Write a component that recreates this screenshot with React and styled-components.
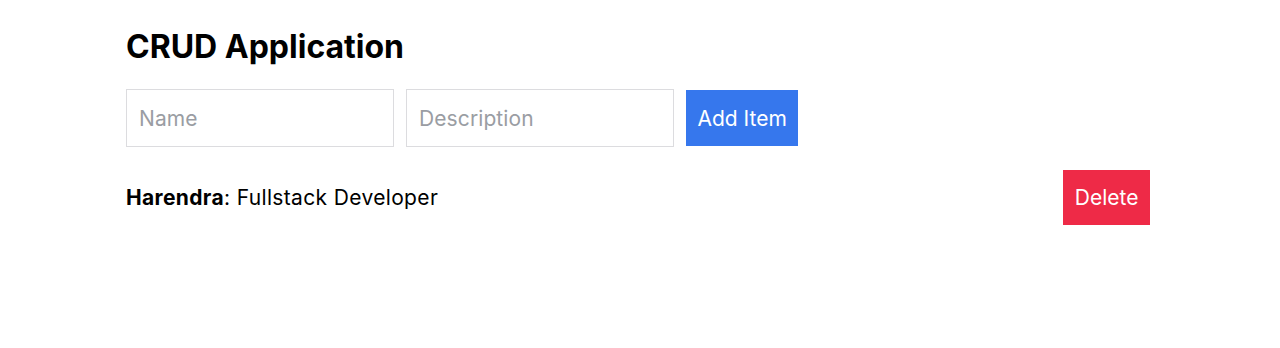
import React, { useState } from "react";
import styled, { createGlobalStyle } from "styled-components";

const Global = createGlobalStyle`
  html, body { margin: 0; padding: 0; background: #fff; }
  body { font-family: Inter, "Noto Sans", sans-serif; color: #000; }
  * { box-sizing: border-box; }
`;

const Page = styled.div`
  width: 1024px;
  margin-left: 126px;
  padding-top: 27px;
`;

const Title = styled.h1`
  margin: 0 0 22px 0;
  font-size: 32px;
  font-weight: 700;
  line-height: 40px;
`;

const Form = styled.form`
  display: flex;
  align-items: center;
  gap: 12px;
`;

const Input = styled.input`
  width: 268px;
  height: 58px;
  border: 1px solid #dcdcdf;
  padding: 0 12px;
  font-family: inherit;
  font-size: 21px;
  letter-spacing: 0.1px;
  color: #000;
  outline: none;
  &::placeholder { color: #9a9da3; }
`;

const Button = styled.button`
  height: ${(p) => p.$h}px;
  padding: 0 11.5px;
  border: none;
  border-radius: 0;
  background: ${(p) => p.$bg};
  color: #fff;
  font-family: inherit;
  font-size: 21px;
  letter-spacing: 0;
  cursor: pointer;
`;

const List = styled.ul`
  list-style: none;
  margin: 23px 0 0 0;
  padding: 0;
`;

const Row = styled.li`
  display: flex;
  align-items: center;
  justify-content: space-between;
  font-size: 21px;
  letter-spacing: 0.35px;
`;

export default function App() {
  const [items] = useState([{ name: "Harendra", description: "Fullstack Developer" }]);
  return (
    <Page>
      <Global />
      <Title>CRUD Application</Title>
      <Form onSubmit={(e) => e.preventDefault()}>
        <Input placeholder="Name" />
        <Input placeholder="Description" />
        <Button type="submit" $bg="#3677ed" $h={56}>Add Item</Button>
      </Form>
      <List>
        {items.map((it) => (
          <Row key={it.name}>
            <span><strong>{it.name}</strong>: {it.description}</span>
            <Button $bg="#ee2a47" $h={55}>Delete</Button>
          </Row>
        ))}
      </List>
    </Page>
  );
}
